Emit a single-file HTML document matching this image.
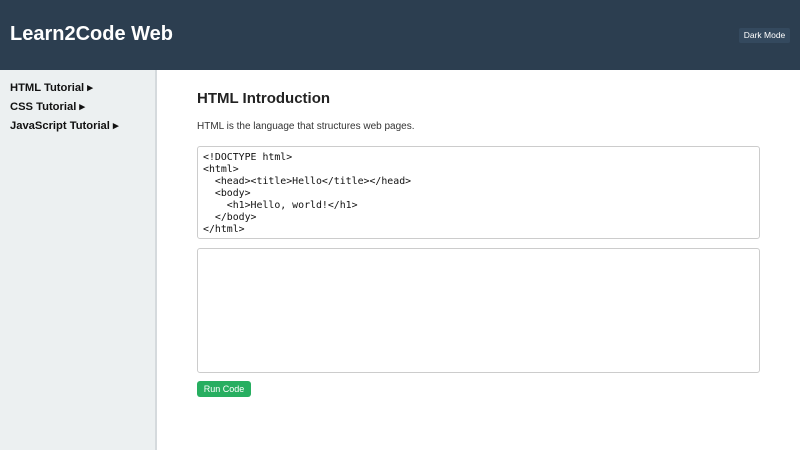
<!DOCTYPE html>
<html><head><style>
*{box-sizing:border-box;margin:0;padding:0}
body{width:800px;height:450px;overflow:hidden;font-family:"Liberation Sans",Arial,sans-serif;background:#fff;color:#222}
header{height:70px;background:#2c3e50;color:#fff;position:relative}
header h1{position:absolute;left:10px;top:23px;font-size:20px;font-weight:bold}
.dm{position:absolute;left:739px;top:28px;width:51px;height:15px;background:#34495e;color:#fff;font-size:8.5px;line-height:15px;text-align:center;border-radius:2px}
aside{position:absolute;left:0;top:70px;width:157px;height:380px;background:#ecf0f1;border-right:2px solid #d5dadd;padding-top:11px}
aside div{font-size:11.2px;font-weight:bold;padding-left:10px;height:19px;line-height:15px;color:#111}
main{position:absolute;left:197px;top:70px}
h2{position:absolute;top:20px;font-size:15px;font-weight:bold;white-space:nowrap;color:#222}
p{position:absolute;top:51px;font-size:10px;white-space:nowrap;color:#333}
.ta{position:absolute;top:76px;left:0;width:563px;height:93px;border:1px solid #ccc;border-radius:3px;padding:5px 5px;font-family:"DejaVu Sans Mono",monospace;font-size:9.9px;line-height:12px;white-space:pre;color:#111}
.out{position:absolute;top:178px;left:0;width:563px;height:125px;border:1px solid #ccc;border-radius:3px}
.btn{position:absolute;top:311px;left:0;width:54px;height:16px;background:#27ae60;color:#fff;font-size:9px;line-height:16px;text-align:center;border-radius:3px}
</style></head><body>
<header><h1>Learn2Code Web</h1><div class="dm">Dark Mode</div></header>
<aside><div>HTML Tutorial ▸</div><div>CSS Tutorial ▸</div><div>JavaScript Tutorial ▸</div></aside>
<main>
<h2>HTML Introduction</h2>
<p>HTML is the language that structures web pages.</p>
<div class="ta">&lt;!DOCTYPE html&gt;
&lt;html&gt;
  &lt;head&gt;&lt;title&gt;Hello&lt;/title&gt;&lt;/head&gt;
  &lt;body&gt;
    &lt;h1&gt;Hello, world!&lt;/h1&gt;
  &lt;/body&gt;
&lt;/html&gt;</div>
<div class="out"></div>
<div class="btn">Run Code</div>
</main>
</body></html>
